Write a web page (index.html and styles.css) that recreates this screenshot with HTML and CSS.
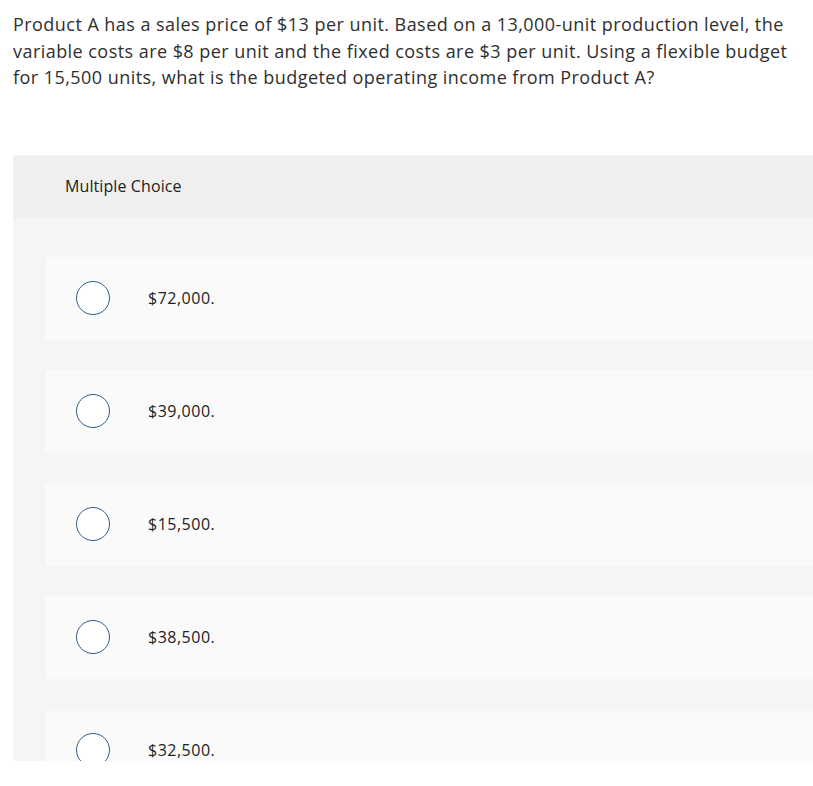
FILE: index.html
```html
<!DOCTYPE html>
<html>
<head>
<meta charset="utf-8">
<link rel="stylesheet" href="styles.css">
</head>
<body>
<div class="question">Product A has a sales price of $13 per unit. Based on a 13,000-unit production level, the variable costs are $8 per unit and the fixed costs are $3 per unit. Using a flexible budget for 15,500 units, what is the budgeted operating income from Product A?</div>
<div class="panel">
  <div class="panel-head">Multiple Choice</div>
  <div class="panel-body">
    <div class="option"><span class="radio"></span><span class="label">$72,000.</span></div>
    <div class="option"><span class="radio"></span><span class="label">$39,000.</span></div>
    <div class="option"><span class="radio"></span><span class="label">$15,500.</span></div>
    <div class="option"><span class="radio"></span><span class="label">$38,500.</span></div>
    <div class="option"><span class="radio"></span><span class="label">$32,500.</span></div>
  </div>
</div>
</body>
</html>
```
FILE: styles.css
```css
html, body {
  margin: 0;
  padding: 0;
  background: #fff;
  overflow: hidden;
}
body {
  font-family: "Open Sans", Lato, sans-serif;
  color: #333;
}
.question {
  font-size: 18px;
  line-height: 26.5px;
  letter-spacing: 0.45px;
  padding: 11px 0 0 13px;
  width: 785px;
  color: #2f2f2f;
}
.panel {
  margin-top: 64px;
  margin-left: 13px;
  width: 800px;
  height: 606px;
  overflow: hidden;
  border-radius: 3px 0 0 0;
  background: #f5f5f5;
}
.panel-head {
  height: 63px;
  background: #efefef;
  display: flex;
  align-items: center;
  padding-left: 52px;
  font-size: 16px;
  letter-spacing: 0.1px;
  color: #222;
}
.panel-body {
  padding: 39px 0 0 32px;
  display: flex;
  flex-direction: column;
  gap: 30px;
}
.option {
  height: 83px;
  background: #fafafa;
  border-radius: 4px 0 0 4px;
  display: flex;
  align-items: center;
  padding-left: 31px;
  flex-shrink: 0;
}
.radio {
  width: 32px;
  height: 32px;
  border: 1.5px solid #2d5f8e;
  border-radius: 50%;
  background: #fff;
  flex-shrink: 0;
}
.label {
  margin-left: 38px;
  font-size: 16px;
  letter-spacing: 0.5px;
  color: #222;
}
```
